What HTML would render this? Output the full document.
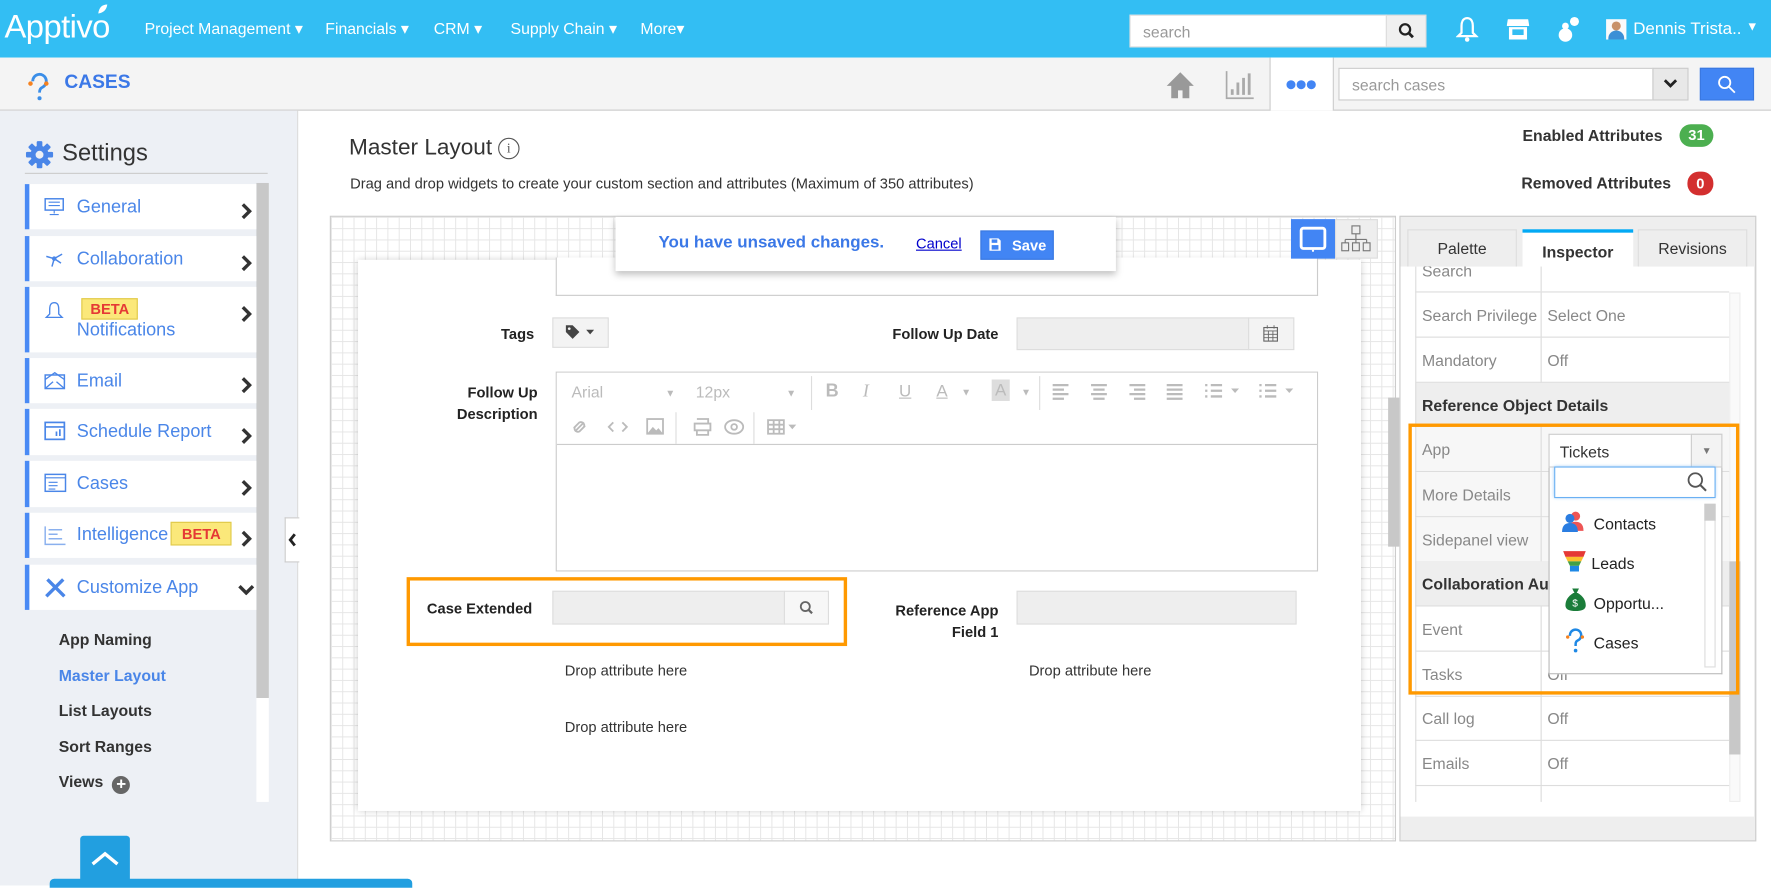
<!DOCTYPE html>
<html><head><meta charset="utf-8">
<style>
*{box-sizing:border-box;margin:0;padding:0}
html,body{width:1771px;height:885px;overflow:hidden;background:#fff;font-family:"Liberation Sans",Arial,sans-serif}
#w{position:absolute;left:0;top:0;width:1568px;height:784px;transform:scale(1.12946);transform-origin:0 0;background:#fff}
.a{position:absolute}
.top{left:0;top:0;width:1568px;height:51px;background:#33bef3}
.mn{color:#fff;font-size:14px;top:17px}
.bar2{left:0;top:51px;width:1568px;height:47px;background:#f4f4f4;border-bottom:1px solid #ccc}
.side{left:0;top:98px;width:264px;height:686px;background:#edf0f5;border-right:1px solid #ddd}
.it{position:absolute;left:22px;width:205px;background:#fff;border-left:4px solid #4a8af4}
.it .t{position:absolute;left:42px;font-size:16px;color:#4a86e8}
.it .ch{position:absolute;left:187px}
.it svg{position:absolute;left:13px}
.sub{position:absolute;left:52px;font-size:14px;font-weight:bold;color:#333}
.grid{left:292px;top:191px;width:944px;height:554px;border:1px solid #ccc;background-color:#fff;background-image:linear-gradient(#e6e6e6 1px,transparent 1px),linear-gradient(90deg,#e6e6e6 1px,transparent 1px);background-size:10px 10px}
.lbl{position:absolute;font-size:13px;font-weight:bold;color:#222;text-align:right}
.inp{position:absolute;background:#eee;border:1px solid #ddd}
.dr{position:absolute;font-size:13px;color:#333}
.row{position:absolute;left:1253px;width:278px;height:40px;border-bottom:1px solid #ddd;border-left:1px solid #ddd}
.row .k{position:absolute;left:5px;top:12px;font-size:14px;color:#888}
.row .v{position:absolute;left:116px;top:12px;font-size:14px;color:#888}
.row .sp{position:absolute;left:110px;top:0;width:1px;height:40px;background:#ddd}
.hd{background:#eee}
.hd .k{font-weight:bold;color:#333;font-size:14px}
.tb{position:absolute;color:#bbb;font-size:14px}
</style></head><body><div id="w">
<svg width="0" height="0" style="position:absolute"><defs><path id="chev" d="M2 2l6 6-6 6" fill="none" stroke="#333" stroke-width="3"/></defs></svg>
<!-- top bar -->
<div class="a top"></div>
<div class="a" style="left:4px;top:8px;font-size:29px;color:#fff;letter-spacing:-0.5px">Apptivo</div>
<svg class="a" style="left:86px;top:3px" width="10" height="10"><path d="M1 9 Q2 1 9 1 Q8 8 1 9Z" fill="#fff"/></svg>
<div class="a mn" style="left:128px">Project Management ▾</div>
<div class="a mn" style="left:288px">Financials ▾</div>
<div class="a mn" style="left:384px">CRM ▾</div>
<div class="a mn" style="left:452px">Supply Chain ▾</div>
<div class="a mn" style="left:567px">More▾</div>
<div class="a" style="left:1000px;top:13px;width:228px;height:29px;background:#fff;border:1px solid #ddd;font-size:14px;color:#999;padding:6px 11px">search</div>
<div class="a" style="left:1227px;top:13px;width:36px;height:29px;background:#f0f0f0;border:1px solid #ddd"></div>
<svg class="a" style="left:1238px;top:20px" width="14" height="14"><circle cx="6" cy="6" r="4.5" fill="none" stroke="#222" stroke-width="2"/><path d="M9 9l4 4" stroke="#222" stroke-width="2.5"/></svg>
<svg class="a" style="left:1289px;top:14px" width="20" height="24"><path d="M10 2C6 2 5 6 5 9v6l-3 3h16l-3-3V9c0-3-1-7-5-7z" fill="none" stroke="#fff" stroke-width="2"/><circle cx="10" cy="21" r="2" fill="#fff"/></svg>
<svg class="a" style="left:1334px;top:16px" width="20" height="20"><path d="M1 1h18l1 6H0z M2 8h16v11H2z" fill="#fff"/><rect x="5" y="10" width="10" height="5" fill="#33bef3"/></svg>
<svg class="a" style="left:1378px;top:13px" width="22" height="26"><circle cx="8" cy="18" r="6" fill="#fff"/><circle cx="8" cy="10" r="3" fill="#fff"/><circle cx="16" cy="6" r="4" fill="#fff"/></svg>
<div class="a" style="left:1422px;top:17px;width:18px;height:18px;background:#fafafa"><div style="position:absolute;left:5px;top:2px;width:8px;height:8px;border-radius:50%;background:#c8926a"></div><div style="position:absolute;left:2px;top:10px;width:14px;height:8px;border-radius:7px 7px 0 0;background:#3b8fd6"></div></div>
<div class="a" style="left:1446px;top:17px;color:#fff;font-size:15px">Dennis Trista..</div>
<div class="a" style="left:1546px;top:18px;color:#fff;font-size:11px">▼</div>
<!-- bar2 -->
<div class="a bar2"></div>
<svg class="a" style="left:22px;top:62px" width="26" height="28"><path d="M7 10a6 6 0 1 1 9 5c-2 1-3 2-3 5" fill="none" stroke="#3b8ee8" stroke-width="2.5"/><circle cx="13" cy="25" r="1.8" fill="#3b8ee8"/><circle cx="5" cy="12" r="2" fill="#f58220"/><circle cx="19" cy="12" r="2" fill="#f58220"/></svg>
<div class="a" style="left:57px;top:63px;font-size:17px;font-weight:bold;color:#3b78e7">CASES</div>
<svg class="a" style="left:1032px;top:62px" width="26" height="26"><path d="M13 2L1 14h4v11h6v-7h4v7h6V14h4z" fill="#999"/></svg>
<svg class="a" style="left:1085px;top:62px" width="26" height="26"><path d="M1 1v24h24" fill="none" stroke="#aaa" stroke-width="1.5"/><path d="M6 22v-5M11 22V11M16 22V7M21 22V3" stroke="#aaa" stroke-width="2.5"/></svg>
<div class="a" style="left:1124px;top:51px;width:57px;height:47px;background:#fff;border-left:1px solid #ccc;border-right:1px solid #ccc"></div>
<div class="a" style="left:1139px;top:66px;width:30px;height:10px"><span style="display:inline-block;width:8px;height:8px;border-radius:50%;background:#4285f4;margin-right:1px"></span><span style="display:inline-block;width:8px;height:8px;border-radius:50%;background:#4285f4;margin-right:1px"></span><span style="display:inline-block;width:8px;height:8px;border-radius:50%;background:#4285f4"></span></div>
<div class="a" style="left:1185px;top:60px;width:279px;height:29px;background:#fff;border:1px solid #ccc;font-size:14px;color:#999;padding:6px 11px">search cases</div>
<div class="a" style="left:1463px;top:60px;width:32px;height:29px;background:#e8e8e8;border:1px solid #ccc"></div>
<svg class="a" style="left:1472px;top:69px" width="14" height="10"><path d="M2 2l5 5 5-5" fill="none" stroke="#222" stroke-width="2.5"/></svg>
<div class="a" style="left:1505px;top:60px;width:48px;height:29px;background:#4285f4;border:1px solid #3a78e0"></div>
<svg class="a" style="left:1520px;top:66px" width="18" height="18"><circle cx="7" cy="7" r="5" fill="none" stroke="#fff" stroke-width="1.6"/><path d="M11 11l5 5" stroke="#fff" stroke-width="1.6"/></svg>
<!-- sidebar -->
<div class="a side"></div>
<svg class="a" style="left:22px;top:124px" width="26" height="26"><g fill="#4a86e8"><circle cx="13" cy="13" r="8"/><rect x="10.5" y="1" width="5" height="24" rx="1"/><rect x="1" y="10.5" width="24" height="5" rx="1"/><rect x="10.5" y="1" width="5" height="24" rx="1" transform="rotate(45 13 13)"/><rect x="10.5" y="1" width="5" height="24" rx="1" transform="rotate(-45 13 13)"/></g><circle cx="13" cy="13" r="3.5" fill="#edf0f5"/></svg>
<div class="a" style="left:55px;top:124px;font-size:21px;color:#333">Settings</div>
<div class="a" style="left:22px;top:153px;width:215px;height:1px;background:#ccc"></div>
<div class="a" style="left:227px;top:162px;width:11px;height:456px;background:#c8c8c8"></div>
<div class="a" style="left:227px;top:618px;width:11px;height:92px;background:#fff"></div>
<div class="it" style="top:163px;height:40px"><svg style="top:12px" width="18" height="16"><rect x="1" y="1" width="16" height="10" fill="none" stroke="#4a86e8" stroke-width="1.3"/><path d="M4 4h10M4 7h10M9 11v3M5 15h8" stroke="#4a86e8"/></svg><span class="t" style="top:12px">General</span><svg class="ch" style="top:16px;left:187px" width="10" height="16"><use href="#chev"/></svg></div>
<div class="it" style="top:209px;height:40px"><svg style="top:12px" width="18" height="16"><path d="M9 8L2 6M9 8l7-4M9 8l-2 7M9 8l6 4" stroke="#4a86e8" stroke-width="1.3"/><circle cx="9" cy="8" r="2" fill="#4a86e8"/></svg><span class="t" style="top:12px">Collaboration</span><svg class="ch" style="top:16px;left:187px" width="10" height="16"><use href="#chev"/></svg></div>
<div class="it" style="top:254px;height:58px"><svg style="top:12px" width="18" height="18"><path d="M9 2C5 2 5 6 5 8v4l-3 3h14l-3-3V8c0-2 0-6-4-6z" fill="none" stroke="#4a86e8" stroke-width="1.2"/></svg><span style="position:absolute;left:46px;top:10px;background:#fbe87a;border:1px solid #e0c94a;color:#e53935;font-weight:bold;font-size:13px;padding:1px 7px">BETA</span><span class="t" style="top:30px">Notifications</span><svg class="ch" style="top:16px;left:187px" width="10" height="16"><use href="#chev"/></svg></div>
<div class="it" style="top:317px;height:40px"><svg style="top:12px" width="20" height="16"><rect x="1" y="3" width="17" height="12" fill="none" stroke="#4a86e8" stroke-width="1.3"/><path d="M1 7l8.5-6 8.5 6M1 15l7-6M18 15l-7-6" fill="none" stroke="#4a86e8" stroke-width="1.2"/></svg><span class="t" style="top:12px">Email</span><svg class="ch" style="top:16px;left:187px" width="10" height="16"><use href="#chev"/></svg></div>
<div class="it" style="top:362px;height:41px"><svg style="top:11px" width="20" height="18"><rect x="1" y="1" width="17" height="15" fill="none" stroke="#4a86e8" stroke-width="1.5"/><path d="M1 5h17M11 13V9M14 13V7" stroke="#4a86e8" stroke-width="1.5"/></svg><span class="t" style="top:12px">Schedule Report</span><svg class="ch" style="top:16px;left:187px" width="10" height="16"><use href="#chev"/></svg></div>
<div class="it" style="top:408px;height:41px"><svg style="top:11px" width="20" height="18"><rect x="1" y="1" width="18" height="15" fill="none" stroke="#4a86e8" stroke-width="1.3"/><path d="M1 4h18M4 8h8M4 11h8M4 14h6" stroke="#4a86e8"/></svg><span class="t" style="top:12px">Cases</span><svg class="ch" style="top:16px;left:187px" width="10" height="16"><use href="#chev"/></svg></div>
<div class="it" style="top:454px;height:40px"><svg style="top:11px" width="20" height="18"><path d="M1 1v16h18M4 4h12M4 8h8M4 12h12" stroke="#8ab0ee" stroke-width="1.3" fill="none"/></svg><span class="t" style="top:11px">Intelligence</span><span style="position:absolute;left:125px;top:8px;background:#fbe87a;border:1px solid #e0c94a;color:#e53935;font-weight:bold;font-size:13px;padding:2px 9px">BETA</span><svg class="ch" style="top:15px;left:187px" width="10" height="16"><use href="#chev"/></svg></div>
<div class="it" style="top:500px;height:40px"><svg style="top:10px" width="20" height="20"><path d="M2 18L17 3M3 3l15 15" stroke="#4a86e8" stroke-width="3"/></svg><span class="t" style="top:12px">Customize App</span><svg class="ch" style="top:17px;left:184px" width="16" height="10"><path d="M2 2l6 6 6-6" fill="none" stroke="#333" stroke-width="3"/></svg></div>
<div class="sub" style="top:558px">App Naming</div>
<div class="sub" style="top:590px;color:#4a86e8">Master Layout</div>
<div class="sub" style="top:621px">List Layouts</div>
<div class="sub" style="top:653px">Sort Ranges</div>
<div class="sub" style="top:684px">Views <span style="display:inline-block;width:16px;height:16px;border-radius:50%;background:#666;color:#fff;text-align:center;line-height:16px;font-size:15px;vertical-align:-2px;margin-left:4px">+</span></div>
<div class="a" style="left:71px;top:740px;width:44px;height:44px;background:#229fe0;border-radius:3px 3px 0 0"></div>
<svg class="a" style="left:80px;top:753px" width="26" height="14"><path d="M2 12L13 3l11 9" fill="none" stroke="#fff" stroke-width="3"/></svg>
<div class="a" style="left:44px;top:778px;width:321px;height:8px;background:#229fe0;border-radius:4px 4px 0 0"></div>
<div class="a" style="left:252px;top:458px;width:13px;height:40px;background:#fff;border:1px solid #ccc;border-right:none"></div>
<svg class="a" style="left:255px;top:472px" width="8" height="12"><path d="M6 1L2 6l4 5" fill="none" stroke="#222" stroke-width="2.5"/></svg>
<!-- main header -->
<div class="a" style="left:309px;top:120px;font-size:20px;color:#333">Master Layout</div>
<div class="a" style="left:441px;top:122px;width:19px;height:19px;border:1.5px solid #555;border-radius:50%;font-size:12px;color:#555;text-align:center;line-height:16px;font-family:'Liberation Serif',serif">i</div>
<div class="a" style="left:310px;top:155px;font-size:13px;color:#333">Drag and drop widgets to create your custom section and attributes (Maximum of 350 attributes)</div>
<div class="a" style="left:1348px;top:112px;font-size:14px;font-weight:bold;color:#333">Enabled Attributes</div>
<div class="a" style="left:1487px;top:110px;width:30px;height:20px;border-radius:10px;background:#4caf50;color:#fff;font-weight:bold;font-size:13px;text-align:center;line-height:20px">31</div>
<div class="a" style="left:1347px;top:154px;font-size:14px;font-weight:bold;color:#333">Removed Attributes</div>
<div class="a" style="left:1494px;top:152px;width:23px;height:21px;border-radius:10px;background:#d32f2f;color:#fff;font-weight:bold;font-size:13px;text-align:center;line-height:21px">0</div>
<!-- canvas -->
<div class="a grid"></div>
<div class="a" style="left:317px;top:230px;width:888px;height:488px;background:#fff;box-shadow:0 0 6px rgba(0,0,0,.2)"></div>
<div class="a" style="left:492px;top:228px;width:675px;height:34px;border:1px solid #ccc;border-top:none;background:#fff"></div>
<div class="a" style="left:545px;top:192px;width:443px;height:48px;background:#fff;box-shadow:0 3px 6px rgba(0,0,0,.25)"></div>
<div class="a" style="left:583px;top:206px;font-size:15px;font-weight:bold;color:#3b78e7">You have unsaved changes.</div>
<div class="a" style="left:811px;top:208px;font-size:13px;color:#00c;text-decoration:underline">Cancel</div>
<div class="a" style="left:868px;top:204px;width:65px;height:26px;background:#4285f4;border:1px solid #3a78e0;color:#fff;font-weight:bold;font-size:13px;padding:5px 0 0 27px">Save</div>
<svg class="a" style="left:875px;top:210px" width="12" height="13"><path d="M1 1h8l2 2v9H1z" fill="#fff"/><rect x="3" y="2" width="5" height="3" fill="#4285f4"/><rect x="3" y="7" width="6" height="4" fill="#4285f4"/></svg>
<div class="a" style="left:1143px;top:194px;width:39px;height:35px;background:#4285f4"></div>
<svg class="a" style="left:1150px;top:200px" width="26" height="24"><rect x="2" y="2" width="21" height="18" rx="2" fill="none" stroke="#fff" stroke-width="2.5"/><circle cx="12.5" cy="22" r="1" fill="#fff"/></svg>
<div class="a" style="left:1182px;top:194px;width:38px;height:35px;background:#eee;border:1px solid #ddd"></div>
<svg class="a" style="left:1187px;top:199px" width="28" height="26"><rect x="10" y="1" width="7" height="7" fill="none" stroke="#777"/><path d="M13.5 8v5M4 13h19M4 13v3M13.5 13v3M23 13v3" stroke="#777" fill="none"/><rect x="1" y="16" width="6" height="7" fill="none" stroke="#777"/><rect x="10.5" y="16" width="6" height="7" fill="none" stroke="#777"/><rect x="20" y="16" width="6" height="7" fill="none" stroke="#777"/></svg>
<!-- form -->
<div class="lbl" style="left:400px;top:288px;width:73px">Tags</div>
<div class="a" style="left:489px;top:281px;width:50px;height:27px;background:#f3f3f3;border:1px solid #ddd"></div>
<svg class="a" style="left:500px;top:287px" width="30" height="14"><path d="M1 1h6l6 6-6 6-6-6z" fill="#444"/><circle cx="4" cy="4" r="1.2" fill="#f3f3f3"/><path d="M19 5h7l-3.5 4z" fill="#444"/></svg>
<div class="lbl" style="left:760px;top:288px;width:124px">Follow Up Date</div>
<div class="inp" style="left:900px;top:281px;width:206px;height:29px"></div>
<div class="a" style="left:1105px;top:281px;width:41px;height:29px;background:#f3f3f3;border:1px solid #ddd"></div>
<svg class="a" style="left:1118px;top:287px" width="14" height="16"><rect x="1" y="3" width="12" height="12" fill="none" stroke="#666"/><path d="M1 6h12M4 1v3M10 1v3M1 9h12M1 12h12M5 6v9M9 6v9" stroke="#666" stroke-width=".8"/></svg>
<div class="lbl" style="left:380px;top:338px;width:96px;line-height:19px">Follow Up<br>Description</div>
<div class="a" style="left:492px;top:329px;width:675px;height:177px;border:1px solid #ccc;background:#fff"></div>
<div class="a" style="left:493px;top:330px;width:673px;height:64px;border-bottom:1px solid #ccc;background:#fff"></div>
<div class="tb" style="left:506px;top:339px">Arial</div><div class="tb" style="left:589px;top:343px;font-size:9px">▼</div>
<div class="tb" style="left:616px;top:339px">12px</div><div class="tb" style="left:696px;top:343px;font-size:9px">▼</div>
<div class="a" style="left:718px;top:333px;width:1px;height:30px;background:#ddd"></div>
<div class="tb" style="left:731px;top:338px;font-weight:bold;font-size:16px">B</div>
<div class="tb" style="left:764px;top:338px;font-style:italic;font-size:16px;font-family:'Liberation Serif',serif">I</div>
<div class="tb" style="left:796px;top:338px;text-decoration:underline;font-size:15px">U</div>
<div class="tb" style="left:829px;top:338px;text-decoration:underline;font-size:15px">A</div><div class="tb" style="left:851px;top:342px;font-size:9px">▼</div>
<div class="tb" style="left:878px;top:336px;background:#ddd;padding:1px 3px;font-size:15px">A</div><div class="tb" style="left:904px;top:342px;font-size:9px">▼</div>
<div class="a" style="left:920px;top:333px;width:1px;height:30px;background:#ddd"></div>
<svg class="a" style="left:930px;top:339px" width="225" height="16"><g stroke="#bbb" stroke-width="2"><path d="M2 2h14M2 6h10M2 10h14M2 14h10"/><path d="M36 2h14M38 6h10M36 10h14M38 14h10"/><path d="M70 2h14M74 6h10M70 10h14M74 14h10"/><path d="M103 2h14M103 6h14M103 10h14M103 14h14"/><path d="M137 2h2M142 2h10M137 7h2M142 7h10M137 12h2M142 12h10"/><path d="M185 2h2M190 2h10M185 7h2M190 7h10M185 12h2M190 12h10"/></g><path d="M160 5h7l-3.5 4zM208 5h7l-3.5 4z" fill="#bbb"/></svg>
<svg class="a" style="left:505px;top:368px" width="210" height="20"><g stroke="#bbb" stroke-width="1.6" fill="none"><path d="M4 14l8-8M3 11l5-5a3 3 0 0 1 4 4M13 9l-5 5a3 3 0 0 1-4-4"/><path d="M38 6l-4 4 4 4M46 6l4 4-4 4"/><rect x="68" y="3" width="14" height="13"/><path d="M112 3h10v4M110 7h14v6h-14zM112 13h10v4h-10z"/><ellipse cx="145" cy="10" rx="8" ry="6"/><circle cx="145" cy="10" r="2.5"/><rect x="175" y="4" width="14" height="12"/><path d="M175 8h14M175 12h14M180 4v12M185 4v12"/></g><path d="M68 16l5-6 3 3 2-2 4 5z" fill="#bbb"/><path d="M193 8h7l-3.5 4z" fill="#bbb"/></svg>
<div class="a" style="left:598px;top:365px;width:1px;height:28px;background:#ddd"></div>
<div class="a" style="left:667px;top:365px;width:1px;height:28px;background:#ddd"></div>
<div class="a" style="left:360px;top:511px;width:390px;height:61px;border:3px solid #f90"></div>
<div class="lbl" style="left:378px;top:531px;width:95px;text-align:left">Case Extended</div>
<div class="inp" style="left:489px;top:523px;width:206px;height:30px"></div>
<div class="a" style="left:694px;top:523px;width:40px;height:30px;background:#f7f7f7;border:1px solid #ddd"></div>
<svg class="a" style="left:707px;top:531px" width="14" height="14"><circle cx="6" cy="6" r="4" fill="none" stroke="#666" stroke-width="1.6"/><path d="M9 9l3 3" stroke="#666" stroke-width="2"/></svg>
<div class="lbl" style="left:770px;top:531px;width:114px;line-height:19px">Reference App<br>Field 1</div>
<div class="inp" style="left:900px;top:523px;width:248px;height:30px"></div>
<div class="dr" style="left:500px;top:586px">Drop attribute here</div>
<div class="dr" style="left:911px;top:586px">Drop attribute here</div>
<div class="dr" style="left:500px;top:636px">Drop attribute here</div>
<!-- right panel -->
<div class="a" style="left:1229px;top:352px;width:10px;height:132px;background:#c8c8c8"></div>
<div class="a" style="left:1239px;top:191px;width:316px;height:554px;background:#eee;border:1px solid #ccc"></div>
<div class="a" style="left:1246px;top:203px;width:97px;height:34px;background:#eee;border:1px solid #ddd;font-size:14px;color:#333;text-align:center;padding-top:8px">Palette</div>
<div class="a" style="left:1348px;top:203px;width:98px;height:34px;background:#fff;border-top:3px solid #03a9f4;font-size:14px;color:#333;text-align:center;padding-top:9px;font-weight:bold">Inspector</div>
<div class="a" style="left:1450px;top:203px;width:97px;height:34px;background:#eee;border:1px solid #ddd;font-size:14px;color:#333;text-align:center;padding-top:8px">Revisions</div>
<div class="a" style="left:1240px;top:236px;width:313px;height:487px;background:#fff"></div>
<div class="a" style="left:1531px;top:259px;width:10px;height:451px;background:#fafafa;border:1px solid #eee"></div>
<div class="a" style="left:1531px;top:497px;width:10px;height:171px;background:#c8c8c8"></div>
<div class="row" style="top:236px;height:23px;overflow:hidden"><span class="k" style="top:-4px">Search</span><span class="sp"></span></div>
<div class="row" style="top:259px"><span class="k">Search Privilege</span><span class="sp"></span><span class="v">Select One</span></div>
<div class="row" style="top:299px"><span class="k">Mandatory</span><span class="sp"></span><span class="v">Off</span></div>
<div class="row hd" style="top:339px"><span class="k">Reference Object Details</span></div>
<div class="row" style="top:378px;background:#f7f7f7"><span class="k">App</span><span class="sp"></span></div>
<div class="row" style="top:418px;background:#f7f7f7"><span class="k">More Details</span><span class="sp"></span></div>
<div class="row" style="top:458px;background:#f7f7f7"><span class="k">Sidepanel view</span><span class="sp"></span></div>
<div class="row hd" style="top:497px"><span class="k">Collaboration Automation</span></div>
<div class="row" style="top:537px"><span class="k">Event</span><span class="sp"></span></div>
<div class="row" style="top:577px"><span class="k">Tasks</span><span class="sp"></span><span class="v">Off</span></div>
<div class="row" style="top:616px"><span class="k">Call log</span><span class="sp"></span><span class="v">Off</span></div>
<div class="row" style="top:656px"><span class="k">Emails</span><span class="sp"></span><span class="v">Off</span></div>
<div class="row" style="top:696px;height:14px;border-bottom:none"><span class="sp" style="height:14px"></span></div>
<div class="a" style="left:1247px;top:375px;width:293px;height:240px;border:3px solid #f90"></div>
<div class="a" style="left:1371px;top:384px;width:154px;height:30px;background:#fff;border:1px solid #ccc;font-size:14px;color:#333;padding:7px 9px">Tickets</div>
<div class="a" style="left:1497px;top:384px;width:28px;height:30px;background:#f3f3f3;border:1px solid #ccc;font-size:9px;color:#777;text-align:center;padding-top:9px">▼</div>
<div class="a" style="left:1371px;top:414px;width:154px;height:183px;background:#fff;border:1px solid #bbb;border-top:none"></div>
<div class="a" style="left:1376px;top:413px;width:143px;height:28px;border:1px solid #6ab0f3;box-shadow:0 0 3px #9cc9f5;background:#fff"></div>
<svg class="a" style="left:1493px;top:417px" width="20" height="20"><circle cx="8" cy="8" r="6" fill="none" stroke="#555" stroke-width="1.6"/><path d="M12.5 12.5l5 5" stroke="#555" stroke-width="1.8"/></svg>
<div class="a" style="left:1509px;top:446px;width:10px;height:145px;border:1px solid #ddd;background:#fff"></div>
<div class="a" style="left:1509px;top:446px;width:10px;height:15px;background:#ccc"></div>
<svg class="a" style="left:1382px;top:452px" width="24" height="20"><circle cx="13" cy="5" r="4" fill="#e55"/><path d="M6 18c0-6 3-8 7-8s7 2 7 8z" fill="#e55"/><circle cx="8" cy="7" r="4" fill="#2a7de1"/><path d="M1 19c0-6 3-8 7-8s7 2 7 8z" fill="#2a7de1"/></svg>
<div class="a" style="left:1411px;top:456px;font-size:14px;color:#222">Contacts</div>
<svg class="a" style="left:1383px;top:486px" width="22" height="22"><path d="M1 2h20l-2 5H3z" fill="#e53935"/><path d="M3 7h16l-2 4H5z" fill="#fbc02d"/><path d="M5 11h12l-2 4H7z" fill="#43a047"/><path d="M7 15h8v5H7z" fill="#1e88e5"/></svg>
<div class="a" style="left:1409px;top:491px;font-size:14px;color:#222">Leads</div>
<svg class="a" style="left:1385px;top:520px" width="20" height="22"><path d="M7 1h6l-2 4h-2z" fill="#1b7d3a"/><path d="M8 5h4c5 3 7 7 7 11 0 4-4 5-9 5s-9-1-9-5c0-4 2-8 7-11z" fill="#1b7d3a"/><text x="7" y="17" font-size="9" fill="#fff" font-family="Liberation Sans">$</text></svg>
<div class="a" style="left:1411px;top:526px;font-size:14px;color:#222">Opportu...</div>
<svg class="a" style="left:1384px;top:555px" width="22" height="24"><path d="M6 8a5 5 0 1 1 7 4c-2 1-2 2-2 5" fill="none" stroke="#1e88e5" stroke-width="2.2"/><circle cx="11" cy="21" r="1.6" fill="#1e88e5"/><circle cx="4" cy="9" r="1.5" fill="#f58220"/><circle cx="17" cy="9" r="1.5" fill="#f58220"/></svg>
<div class="a" style="left:1411px;top:561px;font-size:14px;color:#222">Cases</div>
</div></body></html>
